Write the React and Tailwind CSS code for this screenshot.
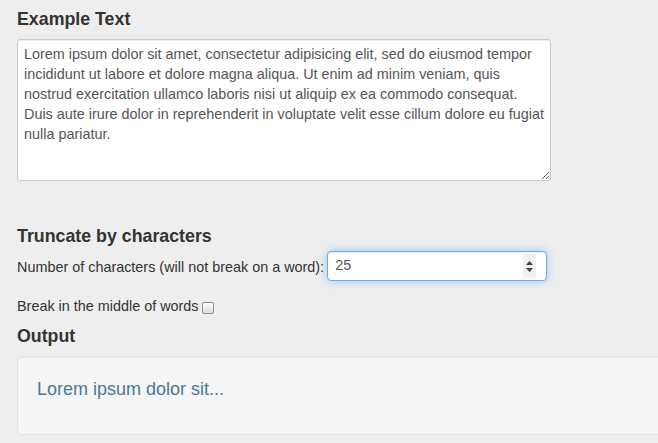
export default function App() {
  const lorem =
    'Lorem ipsum dolor sit amet, consectetur adipisicing elit, sed do eiusmod tempor incididunt ut labore et dolore magna aliqua. Ut enim ad minim veniam, quis nostrud exercitation ullamco laboris nisi ut aliquip ex ea commodo consequat. Duis aute irure dolor in reprehenderit in voluptate velit esse cillum dolore eu fugiat nulla pariatur.';

  return (
    <div className="w-[658px] h-[443px] overflow-hidden bg-[#eeeeee] pl-[17px] pt-[9px] font-['Liberation_Sans',Arial,sans-serif] text-[14.4px] text-[#333]">
      <h3 className="text-[17.8px] font-bold leading-[20px] text-[#333]">Example Text</h3>
      <textarea
        defaultValue={lorem}
        className="mt-[10px] block w-[534px] h-[142px] rounded-[3px] border border-[#ccc] bg-white px-[6px] py-[4px] text-[14.4px] leading-[20px] text-[#555] shadow-[inset_0_1px_1px_rgba(0,0,0,0.075)] outline-none resize"
      />

      <h3 className="mt-[45px] text-[17.8px] font-bold leading-[20px] text-[#333]">Truncate by characters</h3>
      <div className="mt-[5px] flex items-center gap-[3px]">
        <span className="leading-[20px] pt-[2px]">Number of characters (will not break on a word):</span>
        <div className="flex h-[30px] w-[220px] items-center justify-between rounded-[4px] border border-[#66afe9] bg-white pl-[7px] pr-[10px] shadow-[inset_0_1px_1px_rgba(0,0,0,0.075),0_0_8px_rgba(102,175,233,0.6)]">
          <span className="text-[14.4px] text-[#555]">25</span>
          <div className="flex h-[24px] w-[13px] flex-col items-center justify-center gap-[3px] bg-[#f0f0f0]">
            <svg width="7" height="4" viewBox="0 0 7 4"><path d="M3.5 0 L7 4 L0 4 Z" fill="#444" /></svg>
            <svg width="7" height="4" viewBox="0 0 7 4"><path d="M0 0 L7 0 L3.5 4 Z" fill="#444" /></svg>
          </div>
        </div>
      </div>

      <div className="mt-[15px] flex items-center gap-[3px]">
        <span className="leading-[20px]">Break in the middle of words</span>
        <span className="mt-[3px] block h-[12px] w-[12px] rounded-[2px] border border-[#8f8f8f] bg-gradient-to-b from-[#fcfcfc] to-[#dedede]" />
      </div>

      <h3 className="mt-[10px] text-[17.8px] font-bold leading-[20px] text-[#333]">Output</h3>
      <div className="mt-[10px] -mr-[20px] h-[79px] rounded-[4px] border border-[#e3e3e3] bg-[#f5f5f5] pl-[19px] pt-[20px] shadow-[inset_0_1px_1px_rgba(0,0,0,0.05)]">
        <span className="text-[18px] leading-[24px] text-[#4b7894]">Lorem ipsum dolor sit...</span>
      </div>
    </div>
  );
}
